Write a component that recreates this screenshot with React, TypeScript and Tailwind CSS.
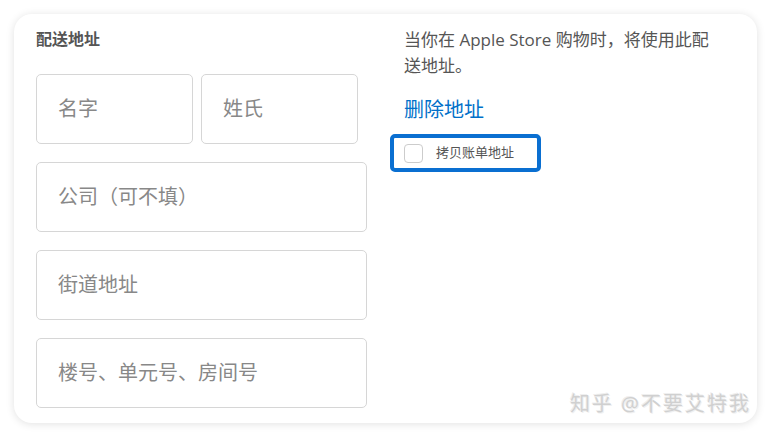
export default function App() {
  const font = { fontFamily: '"Open Sans", "Noto Sans CJK SC", sans-serif' };
  return (
    <div className="w-[771px] h-[437px] bg-white p-[14px]" style={font}>
      <div className="relative w-[743px] h-[409px] rounded-[18px] bg-white shadow-[0_1px_8px_rgba(0,0,0,0.12)] flex pl-[22px] pt-[14px]">
        {/* left form */}
        <div className="w-[331px] flex flex-col">
          <h2 className="text-[16px] leading-[24px] font-bold text-[#555] h-[24px] -mt-[1px]">配送地址</h2>
          <div className="flex gap-[8px] mt-[23px]">
            <Field label="名字" w="w-[157px]" />
            <Field label="姓氏" w="w-[157px]" />
          </div>
          <div className="flex flex-col gap-[18px] mt-[18px]">
            <Field label="公司（可不填）" w="w-[331px]" />
            <Field label="街道地址" w="w-[331px]" />
            <Field label="楼号、单元号、房间号" w="w-[331px]" />
          </div>
        </div>

        {/* right column */}
        <div className="ml-[37px] w-[314px] flex flex-col">
          <p className="text-[17px] leading-[26px] text-[#555] -mt-[1px]">
            当你在 Apple Store 购物时，将使用此配送地址。
          </p>
          <a className="text-[20px] leading-[28px] text-[#0070c9] mt-[17px]">删除地址</a>
          <label className="mt-[10px] -ml-[14px] w-[151px] h-[38px] rounded-[5px] border-[4px] border-[#0a6fd1] flex items-center pl-[10px] gap-[13px]">
            <span className="w-[19px] h-[19px] rounded-[4px] border border-[#ccc] bg-white" />
            <span className="text-[13px] text-[#555]">拷贝账单地址</span>
          </label>
        </div>

        <div className="absolute right-[6px] bottom-[4px] text-[20px] tracking-[2px] text-[#d0d0d0] [text-shadow:1px_1px_0_#f0f0f0,-1px_-1px_0_#aaaaaa33]">
          知乎 @不要艾特我
        </div>
      </div>
    </div>
  );
}

function Field({ label, w }: { label: string; w: string }) {
  return (
    <div className={`${w} h-[70px] rounded-[5px] border border-[#d6d6d6] flex items-center pl-[21px]`}>
      <span className="text-[20px] text-[#888]">{label}</span>
    </div>
  );
}
